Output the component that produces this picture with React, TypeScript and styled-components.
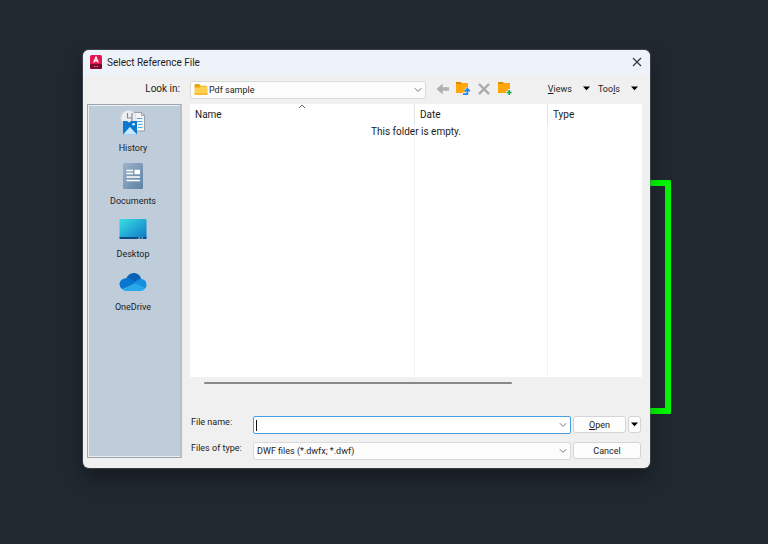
import React, { useState } from "react";
import styled, { createGlobalStyle } from "styled-components";

const GlobalStyle = createGlobalStyle`
  *, *::before, *::after { box-sizing: border-box; }
  body { margin: 0; background: #212830; }
  button, input, select { font: inherit; color: inherit; margin: 0; }
  svg { display: block; flex: none; }
`;

const Page = styled.main`
  min-height: 100vh;
  padding: 50px 97px 76px 83px;
  display: flex;
  align-items: stretch;
  background: #212830;
  color: #1c1c1c;
  font: 9px/12px Roboto, "Open Sans", sans-serif;
`;

const Dialog = styled.section`
  flex: 1;
  min-width: 0;
  display: flex;
  flex-direction: column;
  overflow: hidden;
  background: #f0f0f0;
  border-radius: 6px;
`;

const Shadow = styled.div`
  flex: 1;
  min-width: 0;
  display: flex;
  position: relative;
  z-index: 1;
  border-radius: 6px;
  box-shadow: 0 0 1px 1px rgba(120, 126, 132, 0.35), 0 10px 20px rgba(0, 0, 0, 0.35);
`;

const Bracket = styled.div`
  flex: none;
  width: 21px;
  margin: 130px 0 54px;
  border: 6px solid #00f800;
  border-left: 0;
  border-radius: 0 2px 2px 0;
`;

const TitleBar = styled.header`
  display: flex;
  align-items: center;
  gap: 5px;
  height: 25px;
  padding: 0 8px 1px 7px;
  background: #eef3f9;
`;

const Title = styled.h1`
  flex: 1;
  margin: 0;
  padding-top: 2px;
  font: 10px/14px Roboto, "Open Sans", sans-serif;
`;

const IconButton = styled.button`
  display: flex;
  padding: 0;
  border: 0;
  background: none;
`;

const Body = styled.div`
  flex: 1;
  display: grid;
  grid-template-columns: 95px minmax(0, 1fr);
  grid-template-rows: 29px minmax(0, 1fr);
  column-gap: 8px;
  padding: 0 8px 8px 4px;
`;

const LookLabel = styled.label`
  align-self: center;
  justify-self: end;
  padding: 0 2px 2px 0;
  font-size: 10px;
`;

const Toolbar = styled.div`
  display: flex;
  align-items: center;
`;

const Tools = styled.div`
  flex: none;
  display: flex;
  align-items: center;
  gap: 6px;
  margin-left: 10px;
  padding-bottom: 2px;
`;

const Menus = styled.div`
  flex: none;
  display: flex;
  gap: 8px;
  margin: 0 4px 0 35px;
  padding-bottom: 2px;
`;

const MenuButton = styled.button`
  display: flex;
  align-items: center;
  gap: 11px;
  padding: 0;
  border: 0;
  background: none;
`;

const Places = styled.nav`
  display: flex;
  flex-direction: column;
  gap: 7px;
  margin-bottom: 2px;
  padding: 5px 2px 0 0;
  background: #bfccda;
  border: 1px solid #a0a4ac;
  border-right: 2px solid #b9bdc6;
  box-shadow: inset 1px 1px 0 #e8edf3, inset 0 -1px 0 #e8edf3;
`;

const Place = styled.button`
  display: flex;
  flex-direction: column;
  align-items: center;
  gap: 5px;
  height: 46px;
  padding: 0;
  border: 0;
  background: none;
  line-height: 14px;
`;

const Main = styled.div`
  display: flex;
  flex-direction: column;
  min-width: 0;
`;

const ListArea = styled.div`
  flex: 1;
  display: grid;
  position: relative;
  background: #fff;
  font-size: 10px;
`;

const FileTable = styled.table`
  width: 100%;
  height: 100%;
  table-layout: fixed;
  border-spacing: 0;
`;

const NameColumn = styled.col``;

const DateColumn = styled.col`
  width: 133px;
`;

const TypeColumn = styled.col`
  width: 95px;
`;

const Head = styled.th<{ $first?: boolean }>`
  height: 20px;
  padding: 2px 5px 0;
  text-align: left;
  font-weight: 400;
  vertical-align: middle;
  border-left: ${(p) => (p.$first ? "0" : "1px solid #e2e6ea")};
`;

const HeadInner = styled.div`
  position: relative;
`;

const SortMark = styled.span`
  position: absolute;
  top: -5px;
  left: 0;
  right: 0;
  display: flex;
  justify-content: center;
`;

const EmptyMessage = styled.p`
  position: absolute;
  top: 22px;
  left: 0;
  right: 0;
  margin: 0;
  text-align: center;
`;

const Filler = styled.td<{ $first?: boolean }>`
  padding: 0;
  border-left: ${(p) => (p.$first ? "0" : "1px solid #edf3f9")};
`;

const ScrollTrack = styled.div`
  display: flex;
  margin: 5px 130px 0 14px;
`;

const ScrollThumb = styled.div`
  flex: 1;
  height: 2px;
  border-radius: 1px;
  background: #888;
`;

const Form = styled.form`
  display: grid;
  grid-template-columns: 61px minmax(0, 1fr) 68px;
  grid-template-rows: 18px 18px;
  row-gap: 8px;
  column-gap: 2px;
  padding: 32px 1px 0 0;
`;

const FormLabel = styled.label`
  padding: 0 0 0 1px;
`;

const Field = styled.div<{ $active?: boolean; $grow?: boolean }>`
  flex: ${(p) => (p.$grow ? "1" : "none")};
  min-width: 0;
  height: 18px;
  position: relative;
  display: flex;
  align-items: center;
  background: ${(p) => (p.$active ? "#fff" : "#fcfcfc")};
  border: 1px solid ${(p) => (p.$active ? "#4a9fdf" : "#d9d9d9")};
  border-radius: 2px;
`;

const Select = styled.select<{ $icon?: boolean }>`
  appearance: none;
  width: 100%;
  height: 16px;
  padding: 0 16px 0 ${(p) => (p.$icon ? "18px" : "3px")};
  border: 0;
  outline: 0;
  background: none;
`;

const TextInput = styled.input`
  width: 100%;
  height: 16px;
  padding: 0 16px 0 5px;
  border: 0;
  outline: 0;
  background: none;
  caret-color: transparent;
`;

const Caret = styled.span`
  position: absolute;
  left: 2px;
  width: 1px;
  height: 11px;
  background: #111;
  pointer-events: none;
`;

const FieldMark = styled.span<{ $left?: boolean }>`
  position: absolute;
  ${(p) => (p.$left ? "left: 3px;" : "right: 3px;")}
  pointer-events: none;
`;

const Actions = styled.div`
  display: flex;
  gap: 2px;
`;

const PushButton = styled.button<{ $narrow?: boolean }>`
  flex: ${(p) => (p.$narrow ? "0 0 13px" : "1")};
  height: 17px;
  display: flex;
  align-items: center;
  justify-content: center;
  padding: 0;
  background: #fdfdfd;
  border: 1px solid #d4d4d4;
  border-radius: 3px;
`;

const AppLogo = () => (
  <svg width="12" height="14" viewBox="0 0 12 14">
    <rect width="12" height="14" rx="1.500" fill="#e5154f" />
    <path d="M0 9h12v3.500a1.500 1.500 0 0 1-1.500 1.500h-9A1.500 1.500 0 0 1 0 12.500z" fill="#7d0b2e" />
    <path d="M3.800 7.500 6 2.200l2.200 5.300M4.700 5.900h2.600" fill="none" stroke="#fff" strokeWidth="1.300" />
    <path d="M4 11.500h1.500M6.500 11.500H8" stroke="#d77691" />
  </svg>
);

const Cross = () => (
  <svg width="10" height="10" viewBox="0 0 10 10">
    <path d="m1 1 8 8M9 1 1 9" stroke="#303236" strokeWidth="1.100" />
  </svg>
);

const Chevron = () => (
  <svg width="8" height="6" viewBox="0 0 8 6">
    <path d="m.8 1.200 3.200 3.200 3.200-3.200" fill="none" stroke="#777" />
  </svg>
);

const SortUp = () => (
  <svg width="8" height="5" viewBox="0 0 8 5">
    <path d="m1 4 3-3 3 3" fill="none" stroke="#666" />
  </svg>
);

const Triangle = () => (
  <svg width="7" height="5" viewBox="0 0 7 5">
    <path d="M0 .5h7L3.500 4.300z" fill="#000" />
  </svg>
);

const YellowFolder = () => (
  <svg width="14" height="13" viewBox="0 0 14 13">
    <path d="M.5 2a1 1 0 0 1 1-1h3.700l1.600 1.700H12a1 1 0 0 1 1 1V5H.5z" fill="#eaa70d" />
    <path d="M.5 4.500h4.700l1.400-1h6a1 1 0 0 1 1 1V11a1 1 0 0 1-1 1H1.500a1 1 0 0 1-1-1z" fill="#ffd04f" />
    <path d="M.5 10h13v1a1 1 0 0 1-1 1h-11a1 1 0 0 1-1-1z" fill="#f7bd35" />
  </svg>
);

const BackIcon = () => (
  <svg width="14" height="14" viewBox="0 0 14 14">
    <path d="M.5 7 6.700 1.500v3.700H13v3.600H6.700v3.700z" fill="#b1b1b1" />
  </svg>
);

const orangeFolder = "M0 1h4.700l1 1H12v10H0z";

const UpIcon = () => (
  <svg width="15" height="15" viewBox="0 0 15 15">
    <path d={orangeFolder} fill="#ffa60a" />
    <path d="M0 1h4.700l1 1-1 1H0z" fill="#e28b00" />
    <path d="M6.500 14v-2.700h2.800V9.400H7.400L10.800 6l3.400 3.400h-1.900V14z" fill="#f0f0f0" />
    <path d="M7 13.200h4.300V8.700M8.800 10.300 11.300 7.800l2.500 2.500" fill="none" stroke="#168cf0" strokeWidth="1.700" />
  </svg>
);

const DeleteIcon = () => (
  <svg width="14" height="14" viewBox="0 0 14 14">
    <path d="m2 2 10 10M12 2 2 12" stroke="#a9a9a9" strokeWidth="2.400" />
  </svg>
);

const NewIcon = () => (
  <svg width="16" height="15" viewBox="0 0 16 15">
    <path d="M1 1h4.700l1 1H13v10H1z" fill="#ffa60a" />
    <path d="M1 1h4.700l1 1-1 1H1z" fill="#e28b00" />
    <path d="M12.200 8v6.500M9 11.500h6.500" stroke="#f0f0f0" strokeWidth="2.800" />
    <path d="M12.200 9v5M9.700 11.500h5" stroke="#16ad48" strokeWidth="1.700" />
  </svg>
);

const HistoryIcon = () => (
  <svg width="26" height="26" viewBox="0 0 26 26">
    <path d="M13 2.500h8.500l3 3V21H13z" fill="#f5f6f7" stroke="#8c9196" strokeWidth=".8" />
    <path d="M21.500 2.500v3h3" fill="none" stroke="#8c9196" strokeWidth=".8" />
    <path d="M17 8.500h5.500M17 11.500h5.500M18 14.500h4.500M18 17.500h4.500" stroke="#55a9df" />
    <circle cx="8.500" cy="8" r="7.600" fill="#edf0f2" stroke="#d4d8dc" />
    <path d="M7.500 3v5h5M12 3v8" fill="none" stroke="#848b93" strokeWidth="1.200" />
    <path d="M3 11h4l2 1.500 2-1.500h6v13.500H3z" fill="#0878d0" />
    <path d="m3.200 24.500 6.700-7.500 7 7.500z" fill="#e3f4ff" />
    <path d="m10 17 3.400 4 3.500 3.500H3.200z" fill="#a7d9ff" opacity=".5" />
    <circle cx="13.600" cy="14.300" r="1.300" fill="#e9f6ff" />
  </svg>
);

const DocumentsIcon = () => (
  <svg width="26" height="26" viewBox="0 0 26 26">
    <defs>
      <linearGradient id="docFill" x1="0" y1="0" x2="1" y2="1">
        <stop stopColor="#9fb4ca" />
        <stop offset="1" stopColor="#5d81a6" />
      </linearGradient>
    </defs>
    <rect x="3" y="0" width="20" height="26" rx="1.500" fill="url(#docFill)" />
    <path d="M6.500 7.500H13M6.500 10.500H13M6.500 14H20M6.500 17.500H20" stroke="#fff" strokeWidth="1.500" />
    <path d="M14.500 6.700H20v4.600h-5.500z" fill="#fff" />
  </svg>
);

const DesktopIcon = () => (
  <svg width="28" height="26" viewBox="0 0 28 26">
    <defs>
      <linearGradient id="deskFill" x1="0" y1="0" x2="1" y2="1">
        <stop stopColor="#38e0e4" />
        <stop offset="1" stopColor="#1074c5" />
      </linearGradient>
    </defs>
    <rect x=".5" y="3" width="27" height="20" rx="1" fill="url(#deskFill)" />
    <path d="M.5 21h27v1a1 1 0 0 1-1 1h-25a1 1 0 0 1-1-1z" fill="#0a4d84" />
    <path d="M19.500 22h1.500M22.500 22H24" stroke="#d8f1ff" />
  </svg>
);

const OneDriveIcon = () => (
  <svg width="28" height="26" viewBox="0 0 28 26">
    <path d="M7 10C8.500 6 11.500 4 14.500 4c4 0 6.700 2.300 7.700 6l-5.700 4z" fill="#0961b5" />
    <path d="M7.500 9.300c2-.2 4 .3 5.600 1.400l5 3.100L3.300 20.300A6 6 0 0 1 .5 15.500c0-3.500 3-6.200 7-6.200z" fill="#0877d2" />
    <path d="M16.500 13c1.700-2.300 3.500-3.200 5.700-3 3.300.2 5.300 2.500 5.300 5.800 0 1.500-.4 2.700-1.300 3.700L14 14z" fill="#168fdf" />
    <path d="m3.300 20.300 12.200-5.600c1-.4 1.600-.4 2.500.1l8.200 4.700c-1 1.600-2.600 2.500-4.600 2.500H7.300c-1.600 0-2.900-.6-4-1.700z" fill="#28a7ea" />
  </svg>
);

const places = [
  { name: "History", icon: <HistoryIcon /> },
  { name: "Documents", icon: <DocumentsIcon /> },
  { name: "Desktop", icon: <DesktopIcon /> },
  { name: "OneDrive", icon: <OneDriveIcon /> },
];

export default function App() {
  const [fileName, setFileName] = useState("");
  return (
    <>
      <GlobalStyle />
      <Page>
        <Shadow>
          <Dialog role="dialog" aria-labelledby="dialog-title">
            <TitleBar>
              <AppLogo />
              <Title id="dialog-title">Select Reference File</Title>
              <IconButton type="button" aria-label="Close"><Cross /></IconButton>
            </TitleBar>
            <Body>
              <LookLabel htmlFor="folder">Look in:</LookLabel>
              <Toolbar>
                <Field $grow>
                  <FieldMark $left><YellowFolder /></FieldMark>
                  <Select id="folder" $icon><option>Pdf sample</option></Select>
                  <FieldMark><Chevron /></FieldMark>
                </Field>
                <Tools>
                  <IconButton type="button" aria-label="Back"><BackIcon /></IconButton>
                  <IconButton type="button" aria-label="Up one level"><UpIcon /></IconButton>
                  <IconButton type="button" aria-label="Delete"><DeleteIcon /></IconButton>
                  <IconButton type="button" aria-label="Create new folder"><NewIcon /></IconButton>
                </Tools>
                <Menus>
                  <MenuButton type="button"><span><u>V</u>iews</span><Triangle /></MenuButton>
                  <MenuButton type="button"><span>Too<u>l</u>s</span><Triangle /></MenuButton>
                </Menus>
              </Toolbar>
              <Places aria-label="Places">
                {places.map((p) => (
                  <Place type="button" key={p.name}>{p.icon}{p.name}</Place>
                ))}
              </Places>
              <Main>
                <ListArea>
                  <FileTable>
                    <colgroup>
                      <NameColumn />
                      <DateColumn />
                      <TypeColumn />
                    </colgroup>
                    <thead>
                      <tr>
                        <Head $first>
                          <HeadInner>Name<SortMark><SortUp /></SortMark></HeadInner>
                        </Head>
                        <Head>Date</Head>
                        <Head>Type</Head>
                      </tr>
                    </thead>
                    <tbody>
                      <tr><Filler $first /><Filler /><Filler /></tr>
                    </tbody>
                  </FileTable>
                  <EmptyMessage>This folder is empty.</EmptyMessage>
                </ListArea>
                <ScrollTrack><ScrollThumb /></ScrollTrack>
                <Form onSubmit={(e) => e.preventDefault()}>
                  <FormLabel htmlFor="file-name">File name:</FormLabel>
                  <Field $active>
                    <Caret />
                    <TextInput id="file-name" value={fileName} onChange={(e) => setFileName(e.target.value)} />
                    <FieldMark><Chevron /></FieldMark>
                  </Field>
                  <Actions>
                    <PushButton type="submit"><span><u>O</u>pen</span></PushButton>
                    <PushButton type="button" $narrow aria-label="Open options"><Triangle /></PushButton>
                  </Actions>
                  <FormLabel htmlFor="file-type">Files of type:</FormLabel>
                  <Field>
                    <Select id="file-type"><option>DWF files (*.dwfx; *.dwf)</option></Select>
                    <FieldMark><Chevron /></FieldMark>
                  </Field>
                  <Actions><PushButton type="button">Cancel</PushButton></Actions>
                </Form>
              </Main>
            </Body>
          </Dialog>
        </Shadow>
        <Bracket />
      </Page>
    </>
  );
}
